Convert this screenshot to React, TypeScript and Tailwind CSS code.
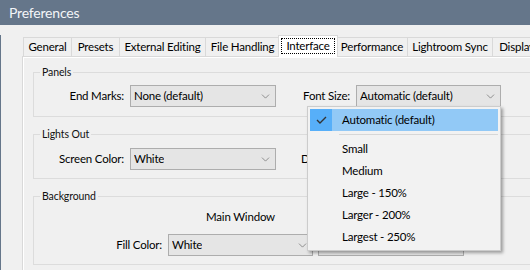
import { ChevronDown } from 'lucide-react'

const tabs = [
  { label: 'General', w: 'w-[49px]' },
  { label: 'Presets', w: 'w-[49px]' },
  { label: 'External Editing', w: 'w-[87px]' },
  { label: 'File Handling', w: 'w-[75px]' },
  { label: 'Interface', w: 'w-[60px]', active: true },
  { label: 'Performance', w: 'w-[72px]' },
  { label: 'Lightroom Sync', w: 'w-[86px]' },
  { label: 'Display', w: 'w-[50px]' },
]

const fontSizes = ['Small', 'Medium', 'Large - 150%', 'Larger - 200%', 'Largest - 250%']

function Select({ value, width }: { value: string; width: string }) {
  return (
    <div
      className={`${width} h-[22px] flex items-center justify-between border border-[#adadad] bg-[#e5e5e5] pl-[3px] pr-[3px]`}
    >
      <span className="truncate leading-none">{value}</span>
      <ChevronDown size={13} strokeWidth={1.1} className="shrink-0 text-[#555]" />
    </div>
  )
}

function Group({ title, className, children }: { title: string; className?: string; children: React.ReactNode }) {
  return (
    <fieldset className={`w-[620px] border border-[#dcdcdc] ${className ?? ''}`}>
      <legend className="ml-[6px] px-[2px] text-[10.5px] leading-[16px] tracking-[-0.1px] text-[#111]">{title}</legend>
      {children}
    </fieldset>
  )
}

export default function App() {
  return (
    <div className="relative w-[530px] h-[270px] overflow-hidden bg-[#f0f0f0] text-[11.5px] tracking-[-0.2px] text-black [font-family:Lato,sans-serif]">
      {/* Title bar */}
      <div className="h-[25px] flex items-center bg-[#65768a] pl-[9px] text-[14px] text-[#f3f5f8]">Preferences</div>

      <div className="h-[245px] border-l border-[#65768a]">
        {/* Tabs */}
        <div className="ml-[22px] mt-[10px] flex items-end">
          {tabs.map((t, i) =>
            t.active ? (
              <div
                key={t.label}
                className={`${t.w} shrink-0 relative z-10 -ml-[2px] -mr-[1px] -mb-[1px] h-[22px] border-x border-t border-[#d9d9d9] bg-white pt-[2px] flex justify-center`}
              >
                <span className="h-[16px] w-[54px] border border-dotted border-black text-center leading-[14px] whitespace-nowrap">
                  {t.label}
                </span>
              </div>
            ) : (
              <div
                key={t.label}
                className={`${t.w} ${i === 0 ? '' : '-ml-[1px]'} shrink-0 h-[19px] border-x border-t border-[#d9d9d9] bg-[#f0f0f0] flex items-center justify-center whitespace-nowrap leading-none`}
              >
                {t.label}
              </div>
            ),
          )}
        </div>

        {/* Tab panel */}
        <div className="ml-[21px] border-l border-t border-[#d9d9d9]">
          <div className="border-l border-t border-white pl-[9px] pt-[6px] pb-[20px]">
            <Group title="Panels" className="pb-[9px]">
              <div className="mt-[5px] flex items-center">
                <span className="w-[90px] text-right">End Marks:</span>
                <div className="ml-[6px]">
                  <Select value="None (default)" width="w-[146px]" />
                </div>
                <span className="w-[74px] text-right">Font Size:</span>
                <div className="ml-[6px]">
                  <Select value="Automatic (default)" width="w-[145px]" />
                </div>
              </div>
            </Group>

            <Group title="Lights Out" className="mt-[9px] pb-[8px]">
              <div className="mt-[6px] flex items-center">
                <span className="w-[90px] text-right">Screen Color:</span>
                <div className="ml-[6px]">
                  <Select value="White" width="w-[146px]" />
                </div>
                <span className="ml-[25px] w-[49px] whitespace-nowrap">Dim Level:</span>
                <div className="ml-[6px]">
                  <Select value="80% (default)" width="w-[144px]" />
                </div>
              </div>
            </Group>

            <Group title="Background" className="mt-[9px] pb-[8px]">
              <div className="mt-[5px] flex h-[16px] items-center">
                <span className="ml-[134px] w-[145px] text-center">Main Window</span>
                <span className="ml-[5px] w-[146px] text-center">Secondary Window</span>
              </div>
              <div className="mt-[9px] flex items-center">
                <span className="w-[128px] text-right">Fill Color:</span>
                <div className="ml-[6px]">
                  <Select value="White" width="w-[145px]" />
                </div>
                <div className="ml-[5px]">
                  <Select value="Medium Gray" width="w-[146px]" />
                </div>
              </div>
            </Group>
          </div>
        </div>
      </div>

      {/* Open dropdown menu */}
      <div className="absolute left-[307px] top-[106px] z-20 w-[194px] border border-[#cccccc] bg-[#f2f2f2] px-[2px] py-[2px] shadow-[2px_2px_3px_rgba(0,0,0,0.35)]">
        <div className="flex h-[22px] items-center bg-[#92c9f6]">
          <div className="flex h-full w-[22px] items-center justify-center bg-[#57aff9]">
            <svg width="11" height="8" viewBox="0 0 11 8" fill="none">
              <path d="M1 4 L4 7 L10 1" stroke="#333" strokeWidth="1.4" />
            </svg>
          </div>
          <span className="ml-[10px]">Automatic (default)</span>
        </div>
        <div className="my-[3px] ml-[29px] h-px bg-[#d7d7d7]" />
        {fontSizes.map((s) => (
          <div key={s} className="flex h-[22px] items-center pl-[32px]">
            {s}
          </div>
        ))}
      </div>
    </div>
  )
}
